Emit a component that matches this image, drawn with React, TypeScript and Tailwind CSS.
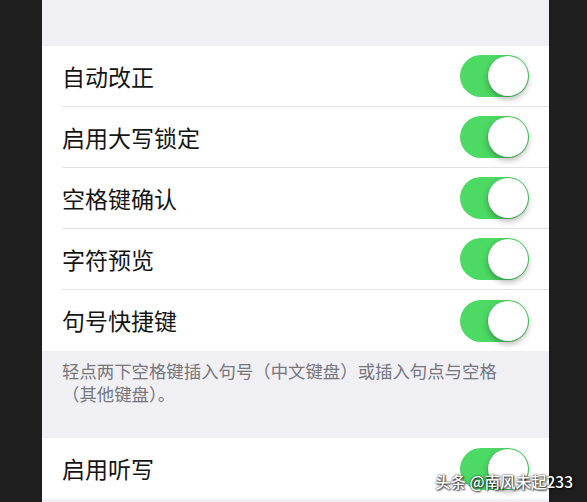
const font = { fontFamily: '"Noto Sans CJK SC", "Noto Sans", sans-serif' };

function Toggle() {
  return (
    <div className="flex h-[42px] w-[69px] items-center justify-end rounded-full bg-[#4cd964] p-[1px]">
      <div className="h-[40px] w-[40px] rounded-full bg-white shadow-[0_3px_6px_rgba(0,0,0,0.3),0_0_0_0.5px_rgba(0,0,0,0.08)]" />
    </div>
  );
}

function Row({ label, last = false }: { label: string; last?: boolean }) {
  return (
    <div className="flex h-[61px] pl-[20px]">
      <div className={`flex flex-1 items-center justify-between pr-[20px] ${last ? "" : "border-b border-[#e3e3e7]"}`}>
        <span className="text-[23px] leading-none text-[#151515]">{label}</span>
        <Toggle />
      </div>
    </div>
  );
}

export default function App() {
  const rows = ["自动改正", "启用大写锁定", "空格键确认", "字符预览", "句号快捷键"];
  return (
    <div className="relative flex h-[502px] w-[587px] overflow-hidden bg-[#1f1f1f]" style={font}>
      <div className="w-[42px] bg-[#1e1e1e]" />
      <div className="flex w-[507px] flex-col bg-[#efeff4]">
        <div className="h-[46px] shrink-0" />
        <div className="bg-white">
          {rows.map((r, i) => (
            <Row key={r} label={r} last={i === rows.length - 1} />
          ))}
        </div>
        <div className="h-[87px] shrink-0 px-[20px] pt-[8px] text-[17.4px] leading-[23px] text-[#76767b]">
          <p>轻点两下空格键插入句号（中文键盘）或插入句点与空格</p>
          <p>（其他键盘）。</p>
        </div>
        <div className="bg-white">
          <Row label="启用听写" last />
        </div>
      </div>
      <div className="flex-1 bg-[#1e1e1e]" />
      <div className="absolute bottom-[13px] right-[14px] text-[15.5px] font-medium leading-none text-white [text-shadow:0_0_2px_rgba(0,0,0,0.9),1px_1px_2px_rgba(0,0,0,0.8)]">
        头条 @南风未起233
      </div>
    </div>
  );
}
